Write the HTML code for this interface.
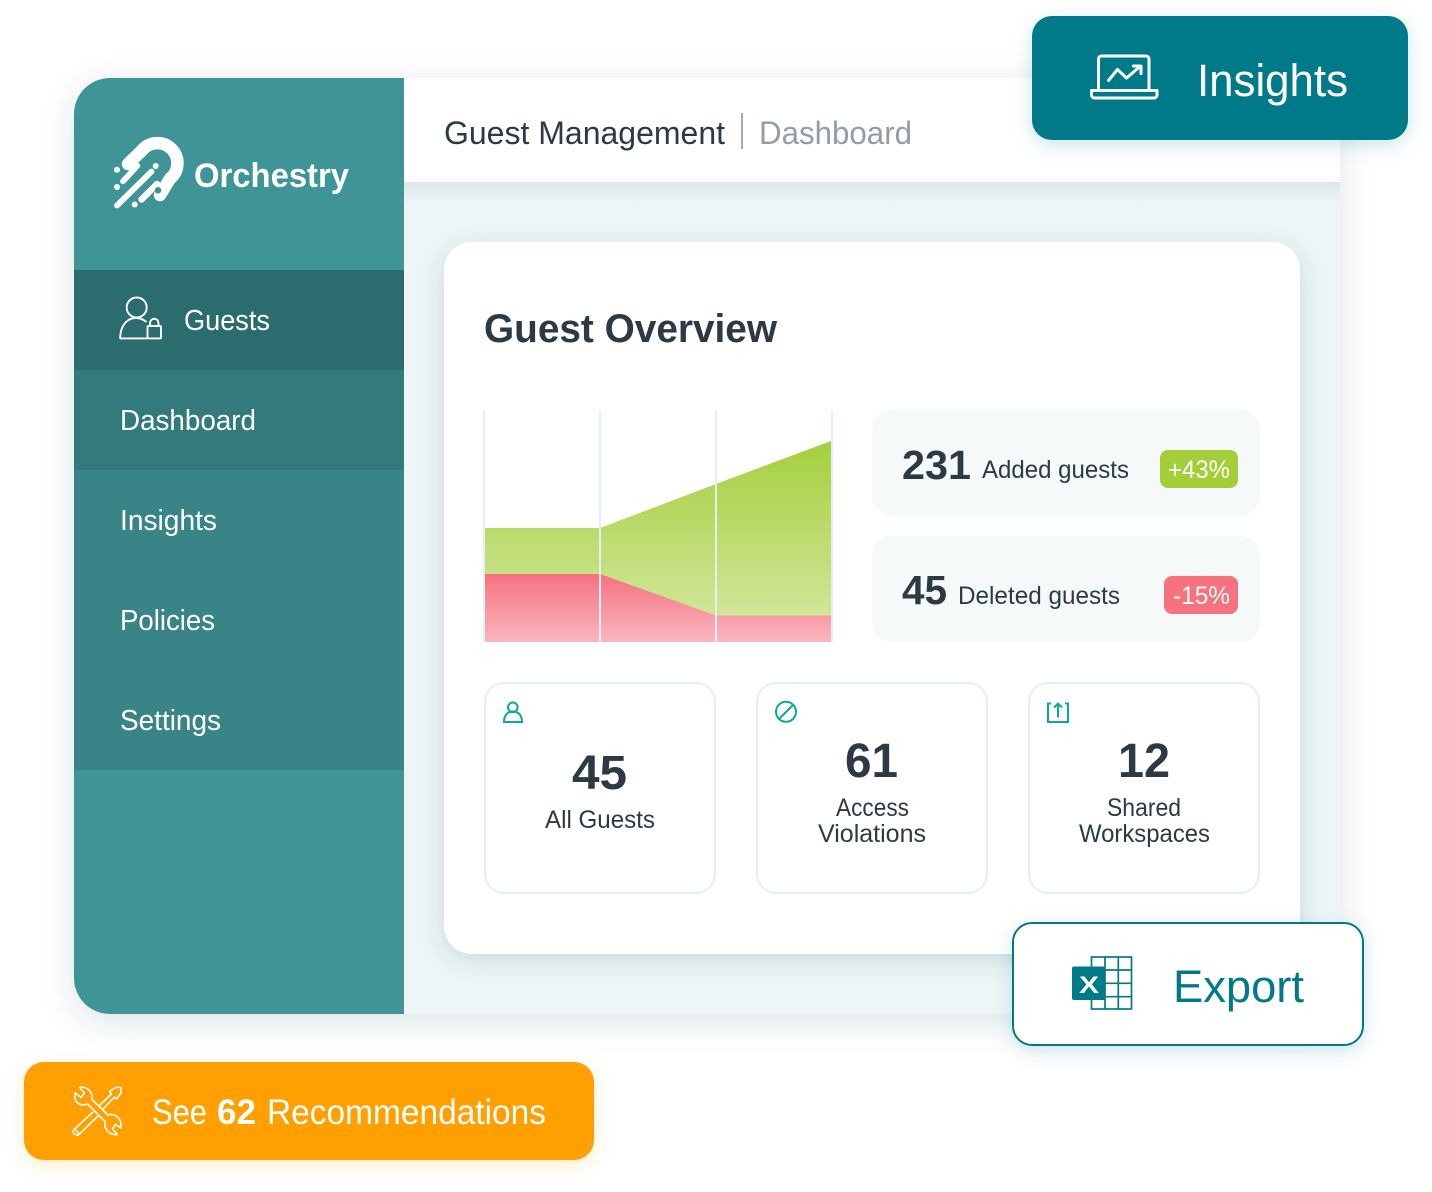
<!DOCTYPE html>
<html lang="en"><head><meta charset="utf-8"><title>Orchestry Guest Overview</title>
<style>
html,body{margin:0;padding:0;background:#fff;width:1432px;height:1192px;overflow:hidden}
svg{display:block}
text{font-family:"Liberation Sans",sans-serif}
.d{fill:#2b3a43}
.w{fill:#fff}
.b{font-weight:700}
</style></head><body>
<svg width="1432" height="1192" viewBox="0 0 1432 1192" xmlns="http://www.w3.org/2000/svg">
<defs>
<filter id="s1" x="-10%" y="-10%" width="120%" height="120%"><feDropShadow dx="0" dy="8" stdDeviation="16" flood-color="#0a4a50" flood-opacity=".14"/></filter>
<filter id="s2" x="-10%" y="-10%" width="120%" height="120%"><feDropShadow dx="0" dy="6" stdDeviation="12" flood-color="#0a4a50" flood-opacity=".16"/></filter>
<filter id="s3" x="-10%" y="-30%" width="120%" height="160%"><feDropShadow dx="0" dy="5" stdDeviation="9" flood-color="#017a88" flood-opacity=".2"/></filter>
<filter id="s4" x="-10%" y="-30%" width="120%" height="160%"><feDropShadow dx="0" dy="5" stdDeviation="9" flood-color="#ff9f00" flood-opacity=".2"/></filter>
<linearGradient id="hs" x1="0" y1="0" x2="0" y2="1"><stop offset="0" stop-color="#dde6e8"/><stop offset="1" stop-color="#edf5f7"/></linearGradient>
<linearGradient id="gr" gradientUnits="userSpaceOnUse" x1="0" y1="441" x2="0" y2="616"><stop offset="0" stop-color="#a5cf3e"/><stop offset="1" stop-color="#d0e698"/></linearGradient>
<linearGradient id="rd" gradientUnits="userSpaceOnUse" x1="0" y1="574" x2="0" y2="642"><stop offset="0" stop-color="#f5717f"/><stop offset="1" stop-color="#fab6c0"/></linearGradient>
</defs>

<!-- App shell -->
<rect x="74" y="78" width="1266" height="936" rx="36" fill="#edf5f7" filter="url(#s1)"/>
<rect x="1000" y="78" width="340" height="936" fill="#edf5f7"/>
<path d="M404,78H110a36,36 0 0 0 -36,36V978a36,36 0 0 0 36,36H404Z" fill="#3f9498"/>
<rect x="74" y="270" width="330" height="100" fill="#2b6d6f"/>
<rect x="74" y="370" width="330" height="100" fill="#327a7b"/>
<rect x="74" y="470" width="330" height="300" fill="#388487"/>
<rect x="404" y="78" width="936" height="104" fill="#fff"/>
<rect x="404" y="182" width="936" height="22" fill="url(#hs)"/>

<!-- Logo -->
<g fill="none" stroke="#fff" stroke-linecap="round">
<path d="M128,164L142,150.400A20,20 0 1 1 170.100,178.600L160,195" stroke-width="12.500"/>
<path d="M117,205.500L151.500,171.500M123,181.300L137.300,165.800" stroke-width="5.800"/>
<path d="M141.500,199.500L157,184" stroke-width="6.500"/>
</g>
<g fill="#fff"><circle cx="117" cy="169.700" r="3"/><circle cx="117" cy="187" r="3"/><circle cx="134.700" cy="204.500" r="3"/><circle cx="155.700" cy="166" r="3"/></g>
<circle cx="158" cy="190.300" r="3.300" fill="#3f9498"/>
<text x="194" y="187" font-size="34" class="w b" textLength="155" lengthAdjust="spacingAndGlyphs">Orchestry</text>

<!-- Nav -->
<g fill="none" stroke="#fff" stroke-width="1.900" stroke-linecap="round" stroke-linejoin="round">
<circle cx="136.700" cy="307.500" r="10"/>
<path d="M146.500,338.400H120.300c-.5-10 5-20 15-20.400 4-.1 7.500 1 10.500 3.500"/>
<rect x="147.500" y="326" width="13.500" height="12.400" rx="1"/>
<path d="M150,326v-3a4.200,4.200 0 0 1 8.500,0v3"/>
</g>
<text x="184" y="330" font-size="29" class="w" textLength="86" lengthAdjust="spacingAndGlyphs">Guests</text>
<text x="120" y="430" font-size="29" class="w" textLength="136" lengthAdjust="spacingAndGlyphs">Dashboard</text>
<text x="120" y="530" font-size="29" class="w" textLength="97" lengthAdjust="spacingAndGlyphs">Insights</text>
<text x="120" y="630" font-size="29" class="w" textLength="95" lengthAdjust="spacingAndGlyphs">Policies</text>
<text x="120" y="730" font-size="29" class="w" textLength="101" lengthAdjust="spacingAndGlyphs">Settings</text>

<!-- Header -->
<text x="444" y="144" font-size="32" class="d" textLength="281" lengthAdjust="spacingAndGlyphs">Guest Management</text>
<rect x="741" y="113" width="2" height="36" fill="#a4acb1"/>
<text x="759" y="144" font-size="32" fill="#959ca4" textLength="153" lengthAdjust="spacingAndGlyphs">Dashboard</text>

<!-- Main card -->
<rect x="444" y="242" width="856" height="712" rx="28" fill="#fff" filter="url(#s2)"/>
<text x="484" y="342" font-size="40" class="d b" textLength="293" lengthAdjust="spacingAndGlyphs">Guest Overview</text>

<!-- Chart -->
<path d="M485,528H600L716,484L831,441V642H485Z" fill="url(#gr)"/>
<path d="M485,574H600L716,615.500H831V642H485Z" fill="url(#rd)"/>
<g fill="#e3eff1"><rect x="483" y="410" width="2" height="232"/><rect x="599" y="410" width="2" height="232"/><rect x="715" y="410" width="2" height="232"/><rect x="831" y="410" width="2" height="232"/></g>

<!-- Stats -->
<rect x="872" y="410" width="388" height="106" rx="20" fill="#f5f9fa"/>
<rect x="872" y="536" width="388" height="106" rx="20" fill="#f5f9fa"/>
<text x="902" y="479" font-size="41" class="d b" textLength="69" lengthAdjust="spacingAndGlyphs">231</text>
<text x="982" y="478" font-size="25" class="d" textLength="147" lengthAdjust="spacingAndGlyphs">Added guests</text>
<rect x="1160" y="450" width="78" height="38" rx="8" fill="#a3ce38"/>
<text x="1168" y="478" font-size="25" class="w" textLength="62" lengthAdjust="spacingAndGlyphs">+43%</text>
<text x="902" y="604" font-size="41" class="d b" textLength="45" lengthAdjust="spacingAndGlyphs">45</text>
<text x="958" y="604" font-size="25" class="d" textLength="162" lengthAdjust="spacingAndGlyphs">Deleted guests</text>
<rect x="1164" y="576" width="74" height="38" rx="8" fill="#f6727f"/>
<text x="1173" y="604" font-size="25" class="w" textLength="57" lengthAdjust="spacingAndGlyphs">-15%</text>

<!-- Tiles -->
<g fill="#fff" stroke="#e4eff1" stroke-width="2">
<rect x="485" y="683" width="230" height="210" rx="19"/>
<rect x="757" y="683" width="230" height="210" rx="19"/>
<rect x="1029" y="683" width="230" height="210" rx="19"/>
</g>
<g fill="none" stroke="#0aa89a" stroke-width="2">
<circle cx="512.800" cy="707.300" r="4.800"/>
<path d="M504,722H522c0-6-3-10.500-9-10.500S504,716 504,722Z"/>
<circle cx="786" cy="711.800" r="10"/>
<path d="M779,719L793,705"/>
<path d="M1051,703.500H1048V722H1068V703.500H1065"/>
<path d="M1058,717.500V703.500M1054,707.500L1058,703.500L1062,707.500"/>
</g>
<text x="572" y="789" font-size="48" class="d b" textLength="55" lengthAdjust="spacingAndGlyphs">45</text>
<text x="545" y="828" font-size="25" class="d" textLength="110" lengthAdjust="spacingAndGlyphs">All Guests</text>
<text x="845" y="777" font-size="48" class="d b" textLength="53" lengthAdjust="spacingAndGlyphs">61</text>
<text x="836" y="816" font-size="25" class="d" textLength="73" lengthAdjust="spacingAndGlyphs">Access</text>
<text x="818" y="842" font-size="25" class="d" textLength="108" lengthAdjust="spacingAndGlyphs">Violations</text>
<text x="1118" y="777" font-size="48" class="d b" textLength="52" lengthAdjust="spacingAndGlyphs">12</text>
<text x="1107" y="816" font-size="25" class="d" textLength="74" lengthAdjust="spacingAndGlyphs">Shared</text>
<text x="1079" y="842" font-size="25" class="d" textLength="131" lengthAdjust="spacingAndGlyphs">Workspaces</text>

<!-- Insights -->
<rect x="1032" y="16" width="376" height="124" rx="20" fill="#017a88" filter="url(#s3)"/>
<g fill="none" stroke="#fff" stroke-width="3" stroke-linecap="round" stroke-linejoin="round">
<path d="M1098.500,90.500V59a3,3 0 0 1 3,-3H1146a3,3 0 0 1 3,3V90.500"/>
<path d="M1091.500,90.500H1157V95a3,3 0 0 1 -3,3H1094.500a3,3 0 0 1 -3,-3Z"/>
<path d="M1108.500,80.500L1117.500,69.500L1126.500,78L1140,66.500"/>
<path d="M1133.500,66H1141V73.500"/>
</g>
<text x="1197" y="96" font-size="45" class="w" textLength="151" lengthAdjust="spacingAndGlyphs">Insights</text>

<!-- Export -->
<rect x="1013" y="923" width="350" height="122" rx="19" fill="#fff" stroke="#017a88" stroke-width="2" filter="url(#s3)"/>
<g fill="none" stroke="#017a88" stroke-width="1.700">
<rect x="1091.500" y="957" width="40" height="52"/>
<path d="M1105,957V1009M1118.300,957V1009M1091.500,970H1131.500M1091.500,983.300H1131.500M1091.500,996.700H1131.500"/>
</g>
<rect x="1072" y="966.500" width="33" height="33.500" rx="2" fill="#017a88"/>
<text x="1079" y="993" font-size="24" class="w b" textLength="20" lengthAdjust="spacingAndGlyphs">X</text>
<text x="1173" y="1002" font-size="45" fill="#017a88" textLength="131" lengthAdjust="spacingAndGlyphs">Export</text>

<!-- Recommendations -->
<rect x="24" y="1062" width="570" height="98" rx="20" fill="#ff9f00" filter="url(#s4)"/>
<g transform="translate(-.5 0)" fill="none" stroke="#fff" stroke-width="1.600" stroke-linecap="round" stroke-linejoin="round">
<path d="M88,1104L105.500,1121.500C104,1129 110,1135.500 118,1134.500L113,1129L116,1124.500L121.500,1128C123,1120 116,1112.500 108.500,1115L92.500,1099.500C94,1092 87,1086 80,1087.500L85,1093L81.500,1097.500L76,1093C73,1101 80,1107 88,1104Z"/>
<path d="M100.500,1105L112,1094L110,1091.500L116,1087.500L121.500,1087.500L121.500,1093L117,1099L115,1097L104,1108.500"/>
<path d="M93,1112.500L74.500,1129.500Q72.500,1132 75,1134Q78,1136 80,1134L98,1116.500M76.500,1130.500L79,1133"/>
</g>
<text x="152" y="1124" font-size="35" class="w" textLength="55" lengthAdjust="spacingAndGlyphs">See</text>
<text x="217" y="1124" font-size="35" class="w b" textLength="39" lengthAdjust="spacingAndGlyphs">62</text>
<text x="267" y="1124" font-size="35" class="w" textLength="279" lengthAdjust="spacingAndGlyphs">Recommendations</text>
</svg>
</body></html>
